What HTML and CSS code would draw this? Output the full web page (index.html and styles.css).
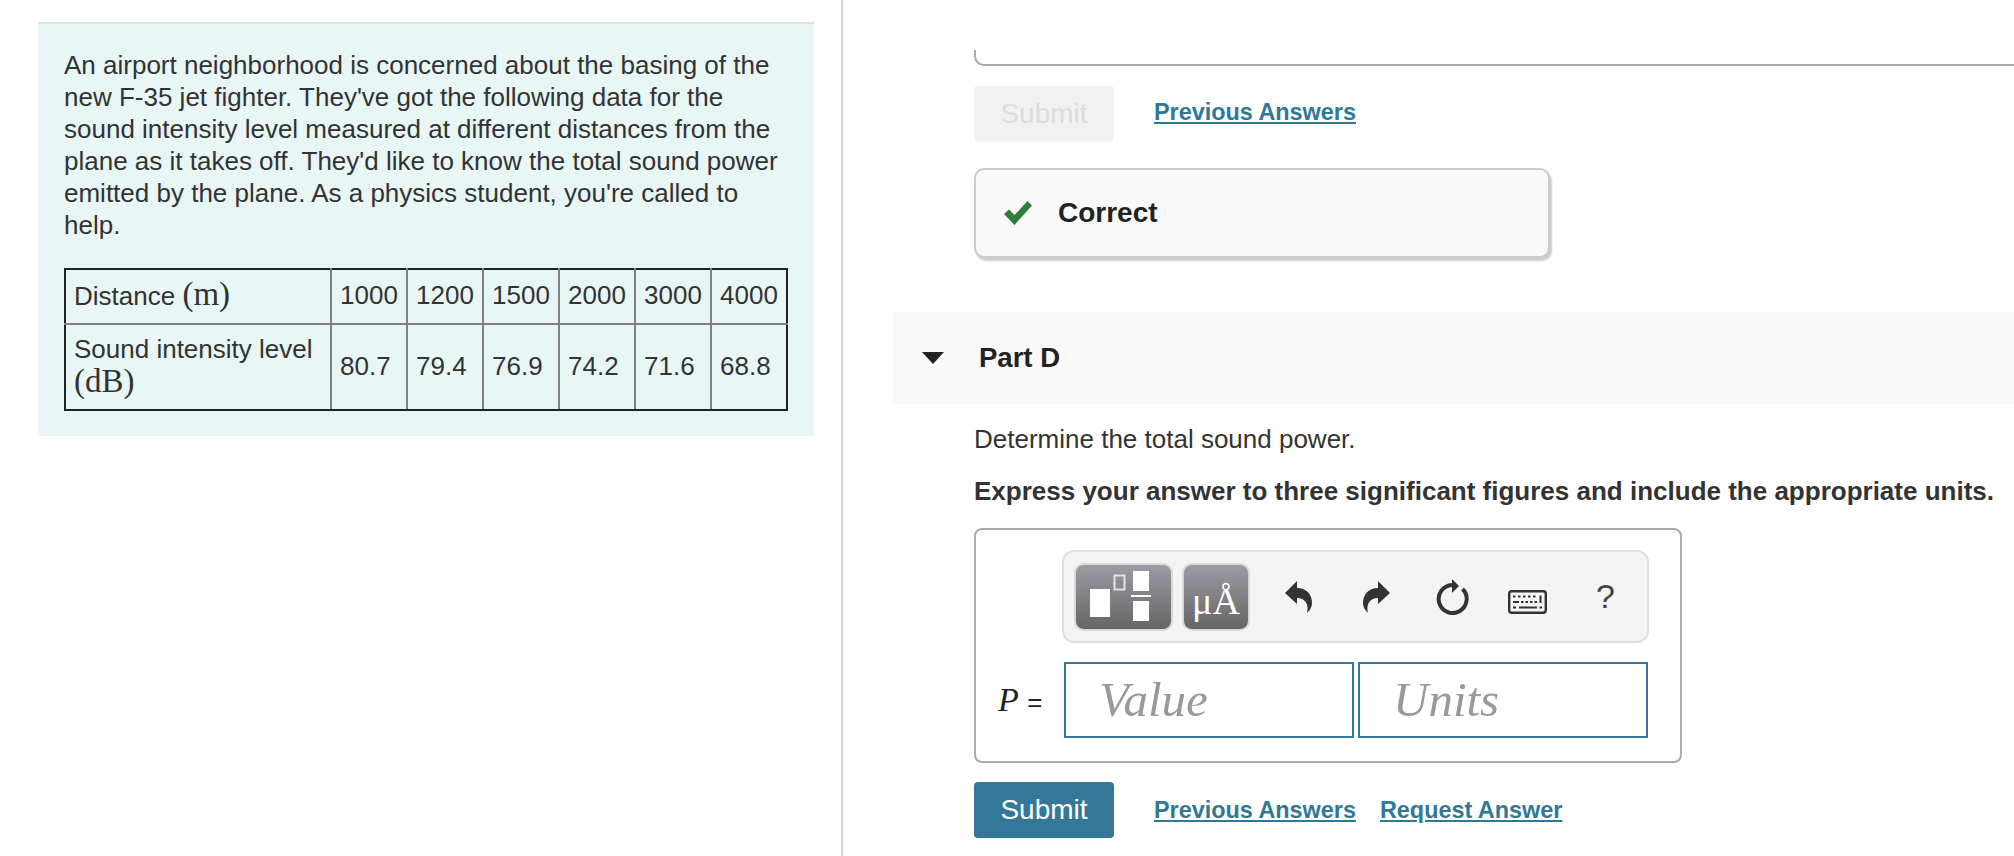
FILE: index.html
```html
<!DOCTYPE html>
<html lang="en">
<head>
<meta charset="utf-8">
<title>Part D</title>
<link rel="stylesheet" href="styles.css">
</head>
<body>
<div class="page">
  <aside class="left">
    <section class="panel">
      <p class="intro">An airport neighborhood is concerned about the basing of the<br>new F-35 jet fighter. They've got the following data for the<br>sound intensity level measured at different distances from the<br>plane as it takes off. They'd like to know the total sound power<br>emitted by the plane. As a physics student, you're called to<br>help.</p>
      <table class="data">
        <tr class="row-a">
          <td class="head">Distance <span class="math">(m)</span></td>
          <td>1000</td><td>1200</td><td>1500</td><td>2000</td><td>3000</td><td>4000</td>
        </tr>
        <tr class="row-b">
          <td class="head">Sound intensity level <span class="math">(dB)</span></td>
          <td>80.7</td><td>79.4</td><td>76.9</td><td>74.2</td><td>71.6</td><td>68.8</td>
        </tr>
      </table>
    </section>
  </aside>
  <main class="right">
    <div class="prev-box"></div>
    <div class="actions first">
      <button class="btn disabled">Submit</button>
      <a class="link" href="#">Previous Answers</a>
    </div>
    <div class="feedback">
      <svg class="check" width="28" height="24" viewBox="0 0 28 24"><path d="M0 13 L5 8.500 L10.500 14 L23.500 0 L28 4.500 L10.500 24 Z" fill="#2f7d3b"/></svg>
      <span>Correct</span>
    </div>
    <div class="part-band">
      <span class="tri"></span>
      <span class="part-title">Part D</span>
    </div>
    <div class="part-body">
      <p class="q">Determine the total sound power.</p>
      <p class="q strong">Express your answer to three significant figures and include the appropriate units.</p>
      <div class="answer">
        <div class="toolbar">
          <div class="tool wide">
            <svg width="95" height="64" viewBox="0 0 95 64">
              <rect x="14" y="24" width="20" height="28" fill="#fff"/>
              <rect x="38.500" y="10.500" width="10" height="14" fill="none" stroke="#e4e4e4" stroke-width="2"/>
              <rect x="57" y="6" width="16" height="20" fill="#fff"/>
              <rect x="55" y="30" width="20" height="2" fill="#fff"/>
              <rect x="57" y="36" width="16" height="20" fill="#fff"/>
            </svg>
          </div>
          <div class="tool narrow">μÅ</div>
          <svg class="ico undo" width="27" height="32" viewBox="0 0 27 32"><path d="M0 12 L12 0 V7 C22 7 27 14 27 22 C27 26 25 29 22 32 C24 24 21 17 12 17 V23 Z" fill="#333"/></svg>
          <svg class="ico redo" width="27" height="32" viewBox="0 0 27 32"><path d="M27 12 L15 0 V7 C5 7 0 14 0 22 C0 26 2 29 5 32 C3 24 6 17 15 17 V23 Z" fill="#333"/></svg>
          <svg class="ico reset" width="33" height="36" viewBox="0 0 33 36"><path d="M26.500 10 A14 14 0 1 1 16 6" fill="none" stroke="#333" stroke-width="4"/><path d="M16 0 L23 7 L16 14 Z" fill="#333"/></svg>
          <svg class="ico keys" width="39" height="24" viewBox="0 0 39 24">
            <rect x="1.200" y="1.200" width="36.600" height="21.600" rx="2.500" fill="none" stroke="#333" stroke-width="2.400"/>
            <path d="M5 6.500 H29" stroke="#333" stroke-width="2" stroke-dasharray="2.500 2.500" fill="none"/>
            <path d="M13 12 H30" stroke="#333" stroke-width="2" stroke-dasharray="2.500 2" fill="none"/>
            <path d="M5 12 H11 M32.500 5.500 V13 M5 17.500 H8 M11 17.500 H29 M31.500 17.500 H34" stroke="#333" stroke-width="2" fill="none"/>
          </svg>
          <span class="help">?</span>
        </div>
        <div class="entry">
          <span class="label"><i>P</i> <span class="eq">=</span></span>
          <div class="field">Value</div>
          <div class="field">Units</div>
        </div>
      </div>
      <div class="actions last">
        <button class="btn primary">Submit</button>
        <a class="link" href="#">Previous Answers</a>
        <a class="link" href="#">Request Answer</a>
      </div>
    </div>
  </main>
</div>
</body>
</html>
```

FILE: styles.css
```css
* { box-sizing: border-box; }
html, body { margin: 0; padding: 0; background: #fff; }
body {
  font-family: "Liberation Sans", Arial, sans-serif;
  color: #333;
  overflow: hidden;
}
.page { display: flex; width: 2014px; height: 856px; overflow: hidden; }

.left {
  flex: 0 0 843px;
  padding: 22px 0 0 38px;
  border-right: 2px solid #c4d3e8;
}
.panel {
  width: 776px;
  height: 414px;
  background: #e8f6f6;
  border-top: 2px solid #dfdfdf;
  padding: 25px 0 0 26px;
}
.intro {
  margin: 0;
  font-size: 26px;
  line-height: 32px;
  width: 745px;
}
.data {
  margin-top: 27px;
  width: 722px;
  height: 141px;
  table-layout: fixed;
  border-collapse: collapse;
  border: 2px solid #222;
  font-size: 26px;
  line-height: 32px;
}
.data td {
  border: 2px solid #808080;
  padding: 0 0 3px 8px;
  width: 76px;
  white-space: nowrap;
}
.data tr:first-child td { border-top-color: #222; }
.data tr:last-child td { border-bottom-color: #222; }
.data td:first-child { border-left-color: #222; }
.data td:last-child { border-right-color: #222; }
.data td.head { width: 266px; white-space: normal; }
.row-a { height: 55px; }
.row-b { height: 86px; }
.math { font-family: "Liberation Serif", serif; font-size: 33px; }

.right { flex: 1 1 auto; min-width: 0; padding-left: 50px; }
.prev-box {
  margin: 50px 0 0 81px;
  height: 16px;
  border-left: 2px solid #aaa;
  border-bottom: 2px solid #aaa;
  border-bottom-left-radius: 10px;
}
.actions { display: flex; align-items: center; height: 56px; }
.actions.first { margin: 20px 0 0 81px; }
.actions.last { margin-top: 19px; }
.btn {
  flex: 0 0 140px;
  height: 56px;
  margin-right: 40px;
  padding: 0;
  border: 0;
  border-radius: 4px;
  font: 28px "Liberation Sans", Arial, sans-serif;
}
.btn.disabled { background: #f1f1f1; color: #dcdcdc; }
.btn.primary { background: #347899; color: #fff; }
.link {
  font-size: 23.400px;
  font-weight: 700;
  color: #2f7896;
  margin-right: 24px;
}
.first .link { margin-top: -3px; }

.feedback {
  display: flex;
  align-items: center;
  width: 576px;
  height: 90px;
  margin: 26px 0 0 81px;
  padding: 0 0 0 28px;
  background: #f9f9f9;
  border: 2px solid #ccc;
  border-radius: 10px;
  box-shadow: 2px 3px 2px #ccc;
  font-size: 28px;
  font-weight: 700;
  color: #222;
}
.check { margin-right: 26px; }

.part-band {
  display: flex;
  align-items: center;
  height: 92px;
  margin-top: 54px;
  background: #f9f9f9;
  padding-left: 29px;
}
.tri {
  width: 0;
  height: 0;
  border-left: 11px solid transparent;
  border-right: 11px solid transparent;
  border-top: 12px solid #222;
  margin-right: 35px;
}
.part-title { font-size: 27.500px; font-weight: 700; color: #222; }

.part-body { padding-left: 81px; }
.q { margin: 0; font-size: 26px; line-height: 32px; white-space: nowrap; }
.q:first-child { margin-top: 19px; }
.q.strong { font-weight: 700; margin-top: 20px; }

.answer {
  width: 708px;
  height: 235px;
  margin-top: 21px;
  border: 2px solid #aaa;
  border-radius: 8px;
  padding: 20px 0 0 86px;
}
.toolbar {
  display: flex;
  align-items: center;
  width: 587px;
  height: 93px;
  padding-left: 10px;
  background: #f4f4f4;
  border: 2px solid #e0e0e0;
  border-radius: 12px;
}
.tool {
  display: flex;
  align-items: center;
  justify-content: center;
  height: 68px;
  border: 2px solid #d8d8d8;
  border-radius: 10px;
  background: linear-gradient(#9c9ba3, #666);
  color: #fff;
}
.tool.wide { width: 99px; margin-right: 9px; }
.tool.narrow {
  width: 68px;
  margin-right: 35px;
  font-family: "Liberation Serif", serif;
  font-size: 38px;
  padding-top: 8px;
}
.ico { flex: none; }
.undo { margin-right: 51px; }
.redo { margin-right: 46px; }
.reset { margin-right: 39px; }
.keys { margin-top: 10px; margin-right: 49px; }
.help { font-size: 34px; color: #444; }

.entry { display: flex; align-items: center; margin-top: 19px; }
.label {
  width: 88px;
  margin-left: -86px;
  padding-left: 22px;
  font-family: "Liberation Serif", serif;
  font-size: 34px;
  color: #222;
  white-space: nowrap;
}
.eq { font-family: "Liberation Sans", sans-serif; font-size: 26px; }
.field {
  width: 290px;
  height: 76px;
  margin-right: 4px;
  padding: 0 0 0 33px;
  border: 2px solid #347899;
  font-family: "Liberation Serif", serif;
  font-style: italic;
  font-size: 49px;
  line-height: 72px;
  color: #999;
}
```
